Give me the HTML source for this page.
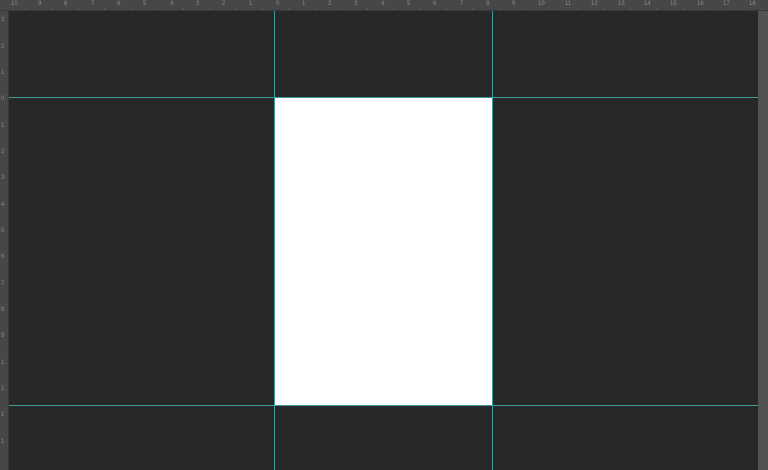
<!DOCTYPE html>
<html><head><style>
body{margin:0;width:768px;height:470px;background:#282828;position:relative;overflow:hidden;font-family:"Liberation Sans",sans-serif}
.top{position:absolute;left:0;top:0;width:768px;height:11px;background:#474747;border-bottom:1px solid #3a3a3a;box-sizing:border-box;
background-image:repeating-linear-gradient(90deg,transparent 0 25.3px,#5c5c5c 25.3px 26.3px);background-size:100% 3px;background-repeat:no-repeat;background-position:0 8px}
.left{position:absolute;left:0;top:11px;width:9px;height:459px;background:#474747;border-right:1px solid #3a3a3a;box-sizing:border-box}
.right{position:absolute;left:758px;top:11px;width:10px;height:459px;background:#535353}
.g{position:absolute;background:#3f9c9c}
.t{position:absolute;top:1px;font-size:6px;color:#8a8a8a}
.l{position:absolute;left:1px;font-size:6px;color:#8a8a8a}
</style></head><body>
<div class="top"></div>
<div class="left"></div>
<div class="right"></div>
<div style="position:absolute;left:275px;top:98px;width:217px;height:307px;background:#fff"></div>
<div class="g" style="left:274px;top:11px;width:1px;height:459px"></div>
<div class="g" style="left:492px;top:11px;width:1px;height:459px"></div>
<div class="g" style="left:9px;top:97px;width:749px;height:1px"></div>
<div class="g" style="left:9px;top:405px;width:749px;height:1px"></div>
<span class="t" style="left:11px">10</span><span class="t" style="left:38px">9</span><span class="t" style="left:64px">8</span><span class="t" style="left:91px">7</span><span class="t" style="left:117px">6</span><span class="t" style="left:143px">5</span><span class="t" style="left:170px">4</span><span class="t" style="left:196px">3</span><span class="t" style="left:222px">2</span><span class="t" style="left:249px">1</span><span class="t" style="left:276px">0</span><span class="t" style="left:302px">1</span><span class="t" style="left:328px">2</span><span class="t" style="left:354px">3</span><span class="t" style="left:381px">4</span><span class="t" style="left:407px">5</span><span class="t" style="left:433px">6</span><span class="t" style="left:460px">7</span><span class="t" style="left:486px">8</span><span class="t" style="left:512px">9</span><span class="t" style="left:538px">10</span><span class="t" style="left:565px">11</span><span class="t" style="left:591px">12</span><span class="t" style="left:618px">13</span><span class="t" style="left:644px">14</span><span class="t" style="left:670px">15</span><span class="t" style="left:697px">16</span><span class="t" style="left:723px">17</span><span class="t" style="left:749px">18</span>
<span class="l" style="top:17px">3</span><span class="l" style="top:44px">2</span><span class="l" style="top:70px">1</span><span class="l" style="top:96px">0</span><span class="l" style="top:123px">1</span><span class="l" style="top:149px">2</span><span class="l" style="top:175px">3</span><span class="l" style="top:202px">4</span><span class="l" style="top:228px">5</span><span class="l" style="top:254px">6</span><span class="l" style="top:281px">7</span><span class="l" style="top:307px">8</span><span class="l" style="top:333px">9</span><span class="l" style="top:360px">1</span><span class="l" style="top:386px">1</span><span class="l" style="top:412px">1</span><span class="l" style="top:439px">1</span>
</body></html>
